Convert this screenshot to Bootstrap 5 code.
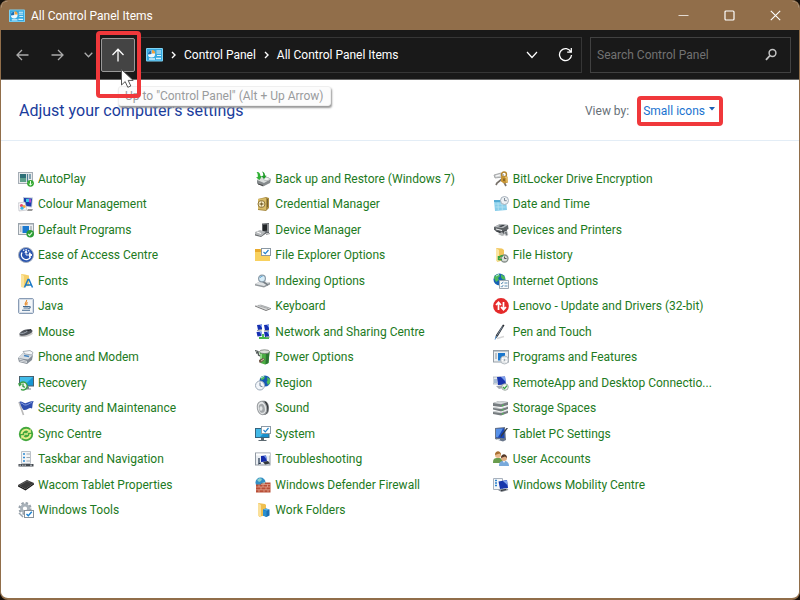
<!DOCTYPE html>
<html lang="en">
<head>
<meta charset="utf-8">
<meta name="viewport" content="width=device-width, initial-scale=1">
<title>All Control Panel Items</title>
<link href="https://cdn.jsdelivr.net/npm/bootstrap@5.3.0/dist/css/bootstrap.min.css" rel="stylesheet">
<style>
  body { background: #15100b; font-family: Roboto, "Open Sans", sans-serif; font-size: 12px; line-height: 16px; }
  .cp-window { background: #fff; border: 1px solid #916e4a; border-bottom-width: 2px; border-radius: 8px; overflow: hidden; }
  .title-bar { background: #916e4a; color: #fff; height: 29px; padding: 0 1px 0 8px; gap: 6px; }
  .caption-btn { width: 46px; height: 29px; color: #fff; }
  .tool-bar { background: #191919; border-bottom: 1px solid #666; height: 50px; padding: 0 8px 0 4px; color: #fff; }
  .nav-btn { width: 35px; height: 34px; color: #aaa; }
  .nav-btn.narrow { width: 26px; }
  .up-btn { width: 34px; height: 34px; background: #444; border: 1px solid #999; border-radius: 2px; color: #fff; }
  .address-bar { border: 1px solid #363636; height: 36px; margin-left: 5px; padding-left: 5px; }
  .address-bar a { color: #fff; }
  .search-box { border: 1px solid #414141; width: 201px; height: 36px; margin-left: 8px; padding: 0 12px 0 6px; }
  .search-box input { color: #ddd; font-size: 12px; outline: none; min-width: 0; }
  .search-box input::placeholder { color: #727272; opacity: 1; }
  .plain-btn { background: none; border: 0; padding: 0; font-size: 12px; line-height: 16px; }
  .page-head { height: 61px; padding: 2px 76px 0 18px; border-bottom: 1px solid #e3edf6; }
  .page-head h1 { font-size: 16px; line-height: 20px; color: #1a3c9c; }
  .view-label { color: #687078; }
  .view-btn { color: #1a73d0; border: 4px solid #f0383b; border-radius: 4px; height: 30px; padding: 0 4px 0 2px; }
  .item-area { padding: 25px 69px 75px 17px; }
  .item-grid { display: grid; grid-auto-rows: 25px 26px; }
  .item-grid a { color: #1d7a22; gap: 4px; }
  svg { flex: none; display: block; }
  .hint-box { position: absolute; left: 17px; top: 48px; z-index: 2; background: #fcfcfc; color: #999b9c; border: 1px solid #efefef; border-radius: 3px; box-shadow: 1px 2px 2px #999; padding: 1px 6px 1px 6px; white-space: nowrap; }
  .red-frame { position: absolute; left: -5px; top: -7px; width: 45px; height: 67px; border: 4px solid #f0383b; border-radius: 4px; z-index: 3; pointer-events: none; }
  .pointer { position: absolute; left: 19px; top: 30px; z-index: 4; }
</style>
<script src="https://cdn.jsdelivr.net/npm/bootstrap@5.3.0/dist/js/bootstrap.bundle.min.js"></script>
</head>
<body>
<svg width="0" height="0" class="position-absolute" aria-hidden="true">
  <symbol id="cp" viewBox="0 0 17 14">
    <rect width="17" height="13.5" rx="1" fill="#7fd4f5"/><rect x="1" y="1" width="15" height="11.5" fill="#35a8e0"/>
    <circle cx="5.5" cy="6" r="3.6" fill="#eaf7fd"/><path d="M5.5 6V2.4A3.6 3.6 0 0 0 2 6.5z" fill="#1b6fb5"/><path d="M6 5.500V2A3.6 3.6 0 0 1 9.2 5.500z" fill="#f3a13a"/>
    <path d="M10.5 3h4.500M10.500 5h4.500M11 7.500h4" stroke="#e4f6fd"/><path d="M3 11h6M10 10.500h5" stroke="#d9f2fc" stroke-width="1.300"/>
  </symbol>
</svg>
<div class="cp-window min-vh-100 d-flex flex-column">
  <header class="title-bar d-flex align-items-center">
    <svg width="16" height="14"><use href="#cp"/></svg>
    <span class="me-auto">All Control Panel Items</span>
    <div class="d-flex">
      <button class="caption-btn plain-btn d-flex align-items-center justify-content-center" aria-label="Minimise"><svg width="11" height="11"><path d="M.5 5.500h10" stroke="currentColor" opacity=".75"/></svg></button>
      <button class="caption-btn plain-btn d-flex align-items-center justify-content-center" aria-label="Maximise"><svg width="11" height="11"><rect x="1" y="1" width="9" height="9" rx="1" fill="none" stroke="currentColor" stroke-width="1.200"/></svg></button>
      <button class="caption-btn plain-btn d-flex align-items-center justify-content-center" aria-label="Close"><svg width="11" height="11"><path d="M.8.8l9.400 9.400M10.200.8L.8 10.200" stroke="currentColor" stroke-width="1.100"/></svg></button>
    </div>
  </header>

  <div class="tool-bar d-flex align-items-center">
    <button class="nav-btn plain-btn d-flex align-items-center justify-content-center" aria-label="Back"><svg width="13" height="12" fill="none" stroke="currentColor" stroke-width="1.300"><path d="M12.500 6H1M6 1L1 6l5 5"/></svg></button>
    <button class="nav-btn plain-btn d-flex align-items-center justify-content-center" aria-label="Forward"><svg width="13" height="12" fill="none" stroke="currentColor" stroke-width="1.300"><path d="M.5 6H12M7 1l5 5-5 5"/></svg></button>
    <button class="nav-btn narrow plain-btn d-flex align-items-center justify-content-center" aria-label="Recent locations"><svg width="9" height="6" fill="none" stroke="currentColor" stroke-width="1.300"><path d="M.7.8l3.800 4 3.800-4"/></svg></button>
    <div class="position-relative">
      <button class="up-btn p-0 d-flex align-items-center justify-content-center" aria-label="Up" aria-describedby="hint"><svg width="14" height="14" fill="none" stroke="currentColor" stroke-width="1.300"><path d="M7 13.500V1.500M1.500 7L7 1.300 12.500 7"/></svg></button>
      <div class="hint-box" id="hint" role="tooltip">Up to "Control Panel" (Alt + Up Arrow)</div>
      <div class="red-frame"></div>
      <svg class="pointer" width="15" height="21" viewBox="0 0 15 21"><path d="M1.500 1.500V17l3.700-3.400 2.600 5.700 3-1.300-2.600-5.600h5z" fill="#fff" stroke="#555" stroke-width="1"/></svg>
    </div>
    <div class="address-bar d-flex align-items-center flex-fill">
      <svg width="17" height="14"><use href="#cp"/></svg>
      <svg width="5" height="8" class="mx-2" fill="none" stroke="#fff" stroke-width="1.400"><path d="M1 1l3 3-3 3"/></svg>
      <a class="text-decoration-none" href="#">Control Panel</a>
      <svg width="5" height="8" class="mx-2" fill="none" stroke="#fff" stroke-width="1.400"><path d="M1 1l3 3-3 3"/></svg>
      <a class="text-decoration-none me-auto" href="#">All Control Panel Items</a>
      <button class="plain-btn text-white" aria-label="Previous locations"><svg width="12" height="8" fill="none" stroke="currentColor" stroke-width="1.200"><path d="M1 1l5 5.500L11 1"/></svg></button>
      <button class="plain-btn text-white ms-3 ps-1 me-2" aria-label="Refresh"><svg width="15" height="15" fill="none" stroke="currentColor" stroke-width="1.300"><path d="M12.900 5A6 6 0 1 0 13.500 8M13.300 1v4.200H9.200"/></svg></button>
    </div>
    <form class="search-box d-flex align-items-center" role="search">
      <input class="bg-transparent border-0 p-0 flex-fill" type="text" placeholder="Search Control Panel" aria-label="Search Control Panel">
      <button class="plain-btn" type="button" aria-label="Search"><svg width="14" height="14" fill="none" stroke="#c4c4c4"><circle cx="8.500" cy="5" r="3.400" stroke-width="1.500"/><path d="M6 7.500L2 11.800" stroke-width="1.800"/></svg></button>
    </form>
  </div>

  <div class="page-head d-flex align-items-center">
    <h1 class="m-0 me-auto fw-normal">Adjust your computer's settings</h1>
    <span class="view-label me-2" id="view-by">View by:</span>
    <button class="plain-btn view-btn d-flex align-items-center gap-1" aria-labelledby="view-by view-value"><span id="view-value">Small icons</span><svg width="6" height="4" class="mb-1"><path d="M0 0h6L3 3.500z" fill="#1a5fb4"/></svg></button>
  </div>

  <main class="item-area">
    <div class="row g-0">
      <div class="col-4"><ul class="item-grid list-unstyled m-0">
        <li class="d-flex align-items-center"><a class="d-flex align-items-center text-decoration-none text-nowrap" href="#"><svg width="16" height="16"><rect x=".5" y="1.500" width="14" height="11" fill="#e8eaec" stroke="#a5adb5"/><path d="M2 3h6v8H2z" fill="#2c6f77"/><path d="M2 7h6v4H2z" fill="#5da08b"/><path d="M9.500 3v8M12 3v5" stroke="#4d7e94" stroke-width="1.300"/><circle cx="12.500" cy="12.300" r="3.400" fill="#35a832"/><path d="M12.500 10v4M10.800 12.500l1.700 1.700 1.700-1.700" stroke="#eaffea" fill="none"/></svg>AutoPlay</a></li>
        <li class="d-flex align-items-center"><a class="d-flex align-items-center text-decoration-none text-nowrap" href="#"><svg width="16" height="16"><path d="M5 1l10 .5-1 10-9-1z" fill="#bcc8d9"/><path d="M6 2l8 .5-.8 8L6 9.500z" fill="#1c3cac"/><path d="M8 3h3v3H8z" fill="#3ccbe8"/><path d="M11 3l2 .2v3.300h-2z" fill="#b44dca"/><path d="M10 13h5l-1 2H9z" fill="#999"/><path d="M0 7l7-1 2 8-8 1z" fill="#f5f5f7" stroke="#b7b9bf" stroke-width=".6"/><circle cx="3.500" cy="9.500" r="1.600" fill="#e8456c"/><circle cx="6" cy="10.500" r="1.600" fill="#f7a93a"/><circle cx="4" cy="12.200" r="1.600" fill="#38b5e6"/></svg>Colour Management</a></li>
        <li class="d-flex align-items-center"><a class="d-flex align-items-center text-decoration-none text-nowrap" href="#"><svg width="16" height="16"><rect x=".5" y="1.500" width="15" height="11" fill="#eceef0" stroke="#9aa3ab"/><path d="M1 2.500h14" stroke="#c3c9cf"/><path d="M4.500 4H11v7H4.500z" fill="#1b78cf"/><path d="M2 5h1.500M2 7h1.500M2 9h1.500M12 5h2M12 7h2" stroke="#8a939b"/><circle cx="12.200" cy="11.800" r="3.800" fill="#2b9d35"/><path d="M10.200 12l1.400 1.400 2.600-3" fill="none" stroke="#d9f5d5" stroke-width="1.200"/></svg>Default Programs</a></li>
        <li class="d-flex align-items-center"><a class="d-flex align-items-center text-decoration-none text-nowrap" href="#"><svg width="16" height="16"><circle cx="8" cy="8" r="7.500" fill="#2954ae" stroke="#a9b2bf"/><path d="M4 5.500A4.800 4.800 0 0 0 12.500 10" fill="none" stroke="#fff" stroke-width="1.400"/><path d="M5 3.500a5 5 0 0 1 7 2" fill="none" stroke="#dbe6fa" stroke-width="1.400" stroke-dasharray="1.500 1"/><path d="M8 8h5.500M11.500 6l2.500 2-2.500 2zM8 8V4.500M6.800 5.800L8 4l1.200 1.800" stroke="#fff" fill="#fff" stroke-width=".9"/></svg>Ease of Access Centre</a></li>
        <li class="d-flex align-items-center"><a class="d-flex align-items-center text-decoration-none text-nowrap" href="#"><svg width="16" height="16"><path d="M3 1l4 .5 4 1V13l-8 1z" fill="#f5cf69"/><path d="M3 1l3 2v12l-3-1z" fill="#fbe39b"/><path d="M6.500 14.500L10 6.500h1l3.500 8M8 12h5" fill="none" stroke="#1c7ac8" stroke-width="1.500"/></svg>Fonts</a></li>
        <li class="d-flex align-items-center"><a class="d-flex align-items-center text-decoration-none text-nowrap" href="#"><svg width="16" height="16"><rect x=".5" y=".5" width="15" height="15" rx="1.500" fill="#f4f6f9" stroke="#899cb5"/><rect x="1.500" y="1.500" width="13" height="13" fill="none" stroke="#d3dce7"/><path d="M8.500 2c1 2-3 2.800-.8 5.500M9.700 4.500c-1.500.8-1.200 1.500-.5 2.700" fill="none" stroke="#e88a28" stroke-width="1.100"/><path d="M5 8.500h6M5.500 10h5M11 8.500c2 0 1.500 1.800-.5 2M4 12.300h8" fill="none" stroke="#42688e" stroke-width="1.100"/></svg>Java</a></li>
        <li class="d-flex align-items-center"><a class="d-flex align-items-center text-decoration-none text-nowrap" href="#"><svg width="16" height="16"><ellipse cx="8" cy="10.500" rx="7" ry="2.200" transform="rotate(-12 8 10.500)" fill="#c9c9c9"/><path d="M1.500 9.500C3 6.500 8 5 12 5.200c3 .3 3.300 2.400 1 3.800-2.700 1.700-6.500 3-9.500 2.700-1.500-.2-2.500-1-2-2.200z" fill="#50545b"/><path d="M2 9c2 1 5 0 7-1.500l3-2.200" stroke="#a5adb8" fill="none"/><path d="M9 7l4-1.500" stroke="#24272c" stroke-width="1.300"/></svg>Mouse</a></li>
        <li class="d-flex align-items-center"><a class="d-flex align-items-center text-decoration-none text-nowrap" href="#"><svg width="16" height="16"><path d="M0 9l5-5 10 2-1 5-5 4-8-2z" fill="#858d96"/><path d="M0 9l5-5 10 2-5 4.500z" fill="#d8dde2"/><path d="M5 2.500l7-1 3 2-1 2.500-7-1z" fill="#f3f5f7" stroke="#89929c" stroke-width=".7"/><path d="M6 6.500l5 1" stroke="#4484c0" stroke-width="1.500"/><path d="M1 10l8 2.500M1.500 12l7.500 1.500" stroke="#edf0f3" stroke-width=".8"/></svg>Phone and Modem</a></li>
        <li class="d-flex align-items-center"><a class="d-flex align-items-center text-decoration-none text-nowrap" href="#"><svg width="16" height="16"><rect x="1.500" y="1.500" width="14" height="9.500" fill="#1796d3" stroke="#48606e"/><path d="M2 2h13L6 10.500H2z" fill="#42bce9"/><path d="M8 11.500h3v2h2v1H7z" fill="#7d8790"/><circle cx="5" cy="11" r="4" fill="#f1f4ef"/><path d="M1.500 9.500A4 4 0 1 1 3 14.300M5 8.500v2.800l1.800 1" fill="none" stroke="#3a9e43" stroke-width="1.400"/><path d="M0 8l1.200 3.500L4 9.500z" fill="#3a9e43"/></svg>Recovery</a></li>
        <li class="d-flex align-items-center"><a class="d-flex align-items-center text-decoration-none text-nowrap" href="#"><svg width="16" height="16"><path d="M1 2l4.500 13" stroke="#b9b9b9" stroke-width="1.600"/><path d="M1.500 2C4 .5 5.500 4 8 3c3-1 4-2.500 8-1.500-2 1.500-1 4-2 7-3-2-4 2-8.500 1.500C3.500 8 3 5 1.500 2z" fill="#304fae"/><path d="M2.500 3C5 2.500 5 5.500 8 5c3-.5 3-2 6-2.500" fill="none" stroke="#839be0"/></svg>Security and Maintenance</a></li>
        <li class="d-flex align-items-center"><a class="d-flex align-items-center text-decoration-none text-nowrap" href="#"><svg width="16" height="16"><circle cx="8" cy="8" r="7.200" fill="#43a83d"/><path d="M3.500 8A4.500 4.500 0 0 1 11 4.800M12.500 8A4.500 4.500 0 0 1 5 11.200" fill="none" stroke="#e7ed8c" stroke-width="1.900"/><path d="M9 6.800l4-.1-.5-4zM7 9.200l-4 .1.500 4z" fill="#e7ed8c"/><path d="M6 8h4" stroke="#e7ed8c" stroke-width="1.500"/></svg>Sync Centre</a></li>
        <li class="d-flex align-items-center"><a class="d-flex align-items-center text-decoration-none text-nowrap" href="#"><svg width="16" height="16"><path d="M3.500.5h9v12h-9z" fill="#f3f5f7" stroke="#bcc2c8"/><path d="M5 3h2M5 6.500h2M5 10h2" stroke="#2d8bd4" stroke-width="1.500"/><path d="M8.500 3H12M8.500 6.500H12M8.500 10H12" stroke="#a0a8af"/><path d="M.5 13h15v2.500H.5z" fill="#454a50"/><path d="M1.500 14.200h1.500m1 0h1.500m1 0H8m4 0h2" stroke="#c8cdd2"/></svg>Taskbar and Navigation</a></li>
        <li class="d-flex align-items-center"><a class="d-flex align-items-center text-decoration-none text-nowrap" href="#"><svg width="16" height="16"><path d="M0 8L9 3l7 3-8.500 6z" fill="#393939"/><path d="M0 8l7.500 4L16 6v1.500L7.500 13.500 0 9.500z" fill="#191919"/><path d="M2 8l7-4 3 1.300" stroke="#666" fill="none" stroke-width=".8"/></svg>Wacom Tablet Properties</a></li>
        <li class="d-flex align-items-center"><a class="d-flex align-items-center text-decoration-none text-nowrap" href="#"><svg width="16" height="16"><circle cx="7" cy="6.500" r="5.300" fill="none" stroke="#98a2ab" stroke-width="2.500" stroke-dasharray="2.300 1.860"/><circle cx="7" cy="6.500" r="3.500" fill="none" stroke="#a9b2ba" stroke-width="2.800"/><path d="M1 11l4 4" stroke="#98a2ab" stroke-width="1.500"/><rect x="6.500" y="8.500" width="9" height="7" fill="#fff" stroke="#87919a"/><path d="M8.500 12l1.800 1.800 3.500-4" fill="none" stroke="#1b82d2" stroke-width="1.400"/></svg>Windows Tools</a></li>
      </ul></div>

      <div class="col-4"><ul class="item-grid list-unstyled m-0">
        <li class="d-flex align-items-center"><a class="d-flex align-items-center text-decoration-none text-nowrap" href="#"><svg width="16" height="16"><path d="M2 9l8-4 6 3-1 4-7 3.500-6-3z" fill="#858a8c"/><path d="M2 9l8-4 6 3-7 4z" fill="#d9dddc"/><ellipse cx="11.500" cy="8" rx="3" ry="1.600" fill="#f3f4f4" stroke="#9da3a3" stroke-width=".6"/><path d="M3 13l5 1.500" stroke="#444"/><path d="M1.500 1C4 .5 5 2 5.500 5H7l-2.500 4L1 6.500l1.800-.5C3 3.500 2.500 2 1.500 1z" fill="#30b035"/><path d="M7 .5c2 .5 3 2 3 4l1.500.2L9 8 6.500 5l1.700-.2C8.500 3 8 2 7 .5z" fill="#209c2b"/></svg>Back up and Restore (Windows 7)</a></li>
        <li class="d-flex align-items-center"><a class="d-flex align-items-center text-decoration-none text-nowrap" href="#"><svg width="16" height="16"><path d="M3 3l8-2 3 1v10l-3 3-8-1z" fill="#a88b40"/><path d="M3 3l8-1v12l-8-1z" fill="#d8bc68"/><circle cx="6.500" cy="8" r="3.500" fill="#f2e7c1" stroke="#917735"/><circle cx="6.500" cy="8" r="1.200" fill="#706038"/><path d="M6.500 5v6M3.500 8h6" stroke="#846b2f" stroke-width=".5"/><path d="M12.500 3v8" stroke="#77612d"/></svg>Credential Manager</a></li>
        <li class="d-flex align-items-center"><a class="d-flex align-items-center text-decoration-none text-nowrap" href="#"><svg width="16" height="16"><path d="M7 1.500L14 1v10l-7 1z" fill="#606468"/><path d="M8 3l4-.5v6L8 9z" fill="#222629"/><path d="M13 2v8" stroke="#b8bbbd"/><path d="M0 10l5-2 6 2-5 4-6-2z" fill="#b5b8ba"/><path d="M0 12l6 2 5-4v1.500L6 15l-6-1.500z" fill="#696d70"/><path d="M2 10l4 1.500" stroke="#fff"/><path d="M11 12l4-1v1l-4 1z" fill="#999"/></svg>Device Manager</a></li>
        <li class="d-flex align-items-center"><a class="d-flex align-items-center text-decoration-none text-nowrap" href="#"><svg width="16" height="16"><path d="M0 2h5.500l1.500 2h8v10H0z" fill="#e9aa2c"/><path d="M0 5h15v9H0z" fill="#f8d15f"/><rect x="6.500" y="1.500" width="9" height="7" fill="#fff" stroke="#8b98a3"/><path d="M8.500 5l1.800 1.700L13.500 3" fill="none" stroke="#2282cb" stroke-width="1.200"/></svg>File Explorer Options</a></li>
        <li class="d-flex align-items-center"><a class="d-flex align-items-center text-decoration-none text-nowrap" href="#"><svg width="16" height="16"><path d="M0 11l6-3 9 1.500v2L9 14.500l-9-2z" fill="#94999d"/><path d="M0 11l6-3 9 1.500L9 13z" fill="#dfe2e4"/><path d="M7 8l6 4" stroke="#777f85" stroke-width="1.600"/><circle cx="7" cy="5.500" r="3.400" fill="#d8edf8" stroke="#8a9ba8" stroke-width="1.200"/><path d="M5 5a2 2 0 0 1 2.500-1.500" fill="none" stroke="#62a7d3"/></svg>Indexing Options</a></li>
        <li class="d-flex align-items-center"><a class="d-flex align-items-center text-decoration-none text-nowrap" href="#"><svg width="16" height="16"><path d="M0 7.500l5-1 11 3.500-5 2z" fill="#d7d8d9"/><path d="M0 7.500L11 12l5-2v1l-5 2L0 8.500z" fill="#777"/><path d="M3 7.500l10 3M5.500 7l9 3" stroke="#929698" stroke-width=".7"/></svg>Keyboard</a></li>
        <li class="d-flex align-items-center"><a class="d-flex align-items-center text-decoration-none text-nowrap" href="#"><svg width="16" height="16"><path d="M2 1l5-.5v5L3 6zM9 1l5-.5V6L10 6.500zM1.500 8l5-.5v4.500l-4 .5zM9 8l5-.5v5l-4 .5z" fill="#162fb1"/><path d="M5 1l2 3V.8zM12 1l2 3V.8zM4.500 8l2 3V7.500zM12 8l2 3V7.500z" fill="#7da5f0"/><path d="M2 6.500l5-.7M9 7l5-.7" stroke="#8d9299"/><path d="M4 14h10M8 10v4" stroke="#43b449" stroke-width="1.800"/><path d="M11 13h4" stroke="#9ba2a8"/></svg>Network and Sharing Centre</a></li>
        <li class="d-flex align-items-center"><a class="d-flex align-items-center text-decoration-none text-nowrap" href="#"><svg width="16" height="16"><path d="M4.500 2.500h10l-1 11.500-3.500 1.500-4.500-1.500z" fill="#4bae43"/><path d="M11 3h3.500l-1 11-3 1.500z" fill="#2c7731"/><ellipse cx="9.500" cy="2.700" rx="5" ry="1.900" fill="#dde1db" stroke="#666f66" stroke-width=".7"/><path d="M6 5v7" stroke="#b3eaa8" stroke-width="1.400"/><path d="M0 1.500l3 1 .5 3.500L5 7M1 4l2.500-.5" fill="none" stroke="#4e5654" stroke-width="1.300"/><path d="M4 11l4-2 2 1-3 3c-2 1.500-3 1-3-2z" fill="#715647"/><path d="M6 12l3-2" stroke="#d4c6af"/></svg>Power Options</a></li>
        <li class="d-flex align-items-center"><a class="d-flex align-items-center text-decoration-none text-nowrap" href="#"><svg width="16" height="16"><circle cx="10" cy="6" r="5.500" fill="#1859b4"/><path d="M6 2c2-1.500 3-1 4-.5L9 4 7 5 5.500 4zM12 2l3 2v4l-2 2-1.500-3 1-1.500z" fill="#4dbd59"/><path d="M6 3l3-2" stroke="#b5def5"/><circle cx="5" cy="10.500" r="4.500" fill="#f3f6fa" stroke="#9ca9b8"/><path d="M5 7.500v3.300l2.500 1" fill="none" stroke="#5d7187" stroke-width=".9"/></svg>Region</a></li>
        <li class="d-flex align-items-center"><a class="d-flex align-items-center text-decoration-none text-nowrap" href="#"><svg width="16" height="16"><path d="M7 1c4-.8 7 2 7 7s-2 7-6 7z" fill="#777b7e"/><path d="M10 2c3 2 3.500 9 0 12" fill="none" stroke="#35383a" stroke-width="1.400"/><ellipse cx="7" cy="8" rx="4.700" ry="6.700" transform="rotate(-12 7 8)" fill="#e3e5e6" stroke="#989c9f"/><ellipse cx="6.800" cy="8.300" rx="2.900" ry="4.500" transform="rotate(-12 7 8)" fill="#a2a6a9"/><ellipse cx="6" cy="8.500" rx="1.500" ry="2.300" fill="#e2e4e5"/></svg>Sound</a></li>
        <li class="d-flex align-items-center"><a class="d-flex align-items-center text-decoration-none text-nowrap" href="#"><svg width="16" height="16"><rect x=".5" y="2.500" width="13.500" height="9" fill="#178fcd" stroke="#35637e"/><path d="M1 3h12l-8 8H1z" fill="#43b9e7"/><path d="M6 12h3v2h2.500v1h-8v-1H6z" fill="#5d6971"/><rect x="6.500" y=".5" width="9" height="7" fill="#fff" stroke="#8c9aa6"/><path d="M8.500 4l1.800 1.800L13.500 2" fill="none" stroke="#2384cd" stroke-width="1.200"/></svg>System</a></li>
        <li class="d-flex align-items-center"><a class="d-flex align-items-center text-decoration-none text-nowrap" href="#"><svg width="16" height="16"><rect x=".5" y="2" width="14.500" height="12" fill="#e9edf2" stroke="#9098a2"/><path d="M1 3.500h14" stroke="#fff" stroke-width="2"/><path d="M6 5l5-.5 1 6-6 .5z" fill="#152caa"/><path d="M9 5l2-.5.5 4z" fill="#7396e8"/><path d="M8 11l5-1 2 2.500-5 1z" fill="#33383e"/><path d="M3 7h2v5H3z" fill="#6d7b8d"/><path d="M3 13l3-1" stroke="#273343"/></svg>Troubleshooting</a></li>
        <li class="d-flex align-items-center"><a class="d-flex align-items-center text-decoration-none text-nowrap" href="#"><svg width="16" height="16"><circle cx="5.500" cy="5.500" r="5" fill="#338fc5"/><path d="M2 3c2-2 3-2 5-1L6 4 4 5zM7 6l3-1v3L7 9z" fill="#8bd0ce"/><path d="M1 7.500h5v-1h4v-1h5.500V15.500H1z" fill="#b84e37"/><path d="M1 10h14.500M1 12.800h14.500M6 7.500h9.500M4 7.500V10M9 5.500v2M12.500 7.500V10M8 7.500V10M6 10v2.800M11 10v2.800M4 12.800v2.700M9 12.800v2.700M13 12.800v2.700" stroke="#edb9a5" stroke-width=".6"/></svg>Windows Defender Firewall</a></li>
        <li class="d-flex align-items-center"><a class="d-flex align-items-center text-decoration-none text-nowrap" href="#"><svg width="16" height="16"><path d="M3 1l7 1 1 1v10l-7 2z" fill="#efbf4f"/><path d="M3 1l3 2v12.500l-3-1.700z" fill="#fae09a"/><path d="M8 7.500l3-1 3.500 1v6L11.500 15 8 13.500z" fill="#196eb4"/><path d="M8 7.500l3-1 3.500 1-3 1.200z" fill="#58b3e7"/><path d="M8 8l3.500 1v6L8 13.500z" fill="#298fd0"/></svg>Work Folders</a></li>
      </ul></div>

      <div class="col-4"><ul class="item-grid list-unstyled m-0">
        <li class="d-flex align-items-center"><a class="d-flex align-items-center text-decoration-none text-nowrap" href="#"><svg width="16" height="16"><path d="M1 4l7-2 3 2-1 2-8 1z" fill="#d2d4d5" stroke="#8c8f90" stroke-width=".7"/><path d="M9 8L4 12l-1 2M10 9l3 6" stroke="#77716a" stroke-width="1.700" fill="none"/><circle cx="11" cy="3.500" r="2.500" fill="none" stroke="#b5852c" stroke-width="1.400"/><path d="M8 5.500h6.500l.5 6-4 1-3-2z" fill="#c69536"/><path d="M12 6l2 1v4" stroke="#f0d084" fill="none"/><path d="M11 7.500v2.500" stroke="#583f13"/><path d="M3 5l4-1" stroke="#fff"/></svg>BitLocker Drive Encryption</a></li>
        <li class="d-flex align-items-center"><a class="d-flex align-items-center text-decoration-none text-nowrap" href="#"><svg width="16" height="16"><path d="M1 4h12l1 10-12 1z" fill="#86cdea"/><path d="M1 4h12v2H1z" fill="#55acd4"/><path d="M2 8h10M2.500 11h10M5 6.500l.3 7.500M9 6.500l.3 7.500" stroke="#b6e3f3" stroke-width=".8"/><circle cx="11.500" cy="4.500" r="4" fill="#eef1f4" stroke="#a6b0ba"/><path d="M11.500 2v2.700h2.200" fill="none" stroke="#6e7d8b" stroke-width=".9"/></svg>Date and Time</a></li>
        <li class="d-flex align-items-center"><a class="d-flex align-items-center text-decoration-none text-nowrap" href="#"><svg width="16" height="16"><path d="M1 5l6-3 8 1 .5 4-6 3L1 8z" fill="#5d6265"/><path d="M1 5l6-3 8 1-5 3z" fill="#b9bdc0"/><path d="M5 4l5-1 2 .5-4 1.500z" fill="#30363b"/><path d="M2 8l7 1.500 5-2v3l-4 2-7-3z" fill="#3d4246"/><path d="M3 7l6 1.500" stroke="#f1f3f4"/><path d="M5 12l4-2 3 3-3 1z" fill="#b3b6b8"/><path d="M11 10l3-1 1 4-2 1z" fill="#72777b" stroke="#d3d6d8" stroke-width=".7"/></svg>Devices and Printers</a></li>
        <li class="d-flex align-items-center"><a class="d-flex align-items-center text-decoration-none text-nowrap" href="#"><svg width="16" height="16"><path d="M3 1l6 .5L11 3v10l-7 2z" fill="#f1c55a"/><path d="M3 1l3 2v12l-3-1z" fill="#fbe5a3"/><circle cx="11.500" cy="11.500" r="3.500" fill="#d8ddd9" stroke="#858e89" stroke-width="1.300"/><path d="M11.500 9.500v2h2" fill="none" stroke="#555"/><path d="M6 11c1-2.500 2.500-2.500 4-2M5.500 9v3.500H9" fill="none" stroke="#35a23e" stroke-width="1.500"/></svg>File History</a></li>
        <li class="d-flex align-items-center"><a class="d-flex align-items-center text-decoration-none text-nowrap" href="#"><svg width="16" height="16"><circle cx="6.500" cy="6.500" r="6" fill="#1762b5"/><path d="M1 5c0-2 3-4 5-4L7 3 5 5l1 2-3 2zM8 1l4 3v3L9 6 8 4z" fill="#4cb95a"/><path d="M3 3l3-1.500" stroke="#bde9ef"/><path d="M6.500 7.500h9v8h-9z" fill="#f8f9fa" stroke="#9ba7b2"/><path d="M8 10l.8.800 1.400-2M8 13.300l.8.800 1.400-2M11.500 10h3M11.500 13h3" fill="none" stroke="#4781ab" stroke-width=".9"/></svg>Internet Options</a></li>
        <li class="d-flex align-items-center"><a class="d-flex align-items-center text-decoration-none text-nowrap" href="#"><svg width="16" height="16"><circle cx="8" cy="8" r="7.900" fill="#e42a2a"/><path d="M5.500 12V4.500M3 7l2.500-2.700L8 7M10.500 4v7.500M8 9l2.500 2.700L13 9" fill="none" stroke="#fff" stroke-width="1.700"/></svg>Lenovo - Update and Drivers (32-bit)</a></li>
        <li class="d-flex align-items-center"><a class="d-flex align-items-center text-decoration-none text-nowrap" href="#"><svg width="16" height="16"><path d="M4 14.500l7-2" stroke="#d7d7d7" stroke-width="1.500"/><path d="M10 .5l1.500.7L5 12l-3 3.500L3 11z" fill="#262b31"/><path d="M9.500 2.500L4 11.500" stroke="#8999ab" stroke-width=".9"/><path d="M3.500 12L2 15.500" stroke="#5b9bd8"/></svg>Pen and Touch</a></li>
        <li class="d-flex align-items-center"><a class="d-flex align-items-center text-decoration-none text-nowrap" href="#"><svg width="16" height="16"><rect x=".5" y="1.500" width="15" height="11.500" fill="#eceff1" stroke="#969fa7"/><path d="M1 2.500h14" stroke="#bec6cc"/><path d="M5 4h7v7.500H5z" fill="#1977ce"/><path d="M2 5h2M2 7h2M2 9h2" stroke="#8c969e"/><circle cx="11.500" cy="11" r="4" fill="#e4e7e9" stroke="#a8b0b6" stroke-width=".8"/><path d="M9 12l5-3M9 9l5 4" stroke="#fff" stroke-width="1.100"/><circle cx="11.500" cy="11" r="1" fill="#9ba5ad"/></svg>Programs and Features</a></li>
        <li class="d-flex align-items-center"><a class="d-flex align-items-center text-decoration-none text-nowrap" href="#"><svg width="16" height="16"><path d="M0 2h8v7H0z" fill="#e5e9ee" stroke="#9fa9b6" stroke-width=".7"/><path d="M1 5h3M1 7h3" stroke="#6d91b9"/><path d="M4 2l8-.5 1 8-8 .5z" fill="#1a36ae"/><path d="M8 2l4-.3.700 5z" fill="#7ca0ed"/><path d="M3 11l9-1 2 2-8 2z" fill="#a3a8ae"/><circle cx="12" cy="12" r="3.300" fill="#f0f3f0" stroke="#8d9991" stroke-width=".8"/><path d="M10 12l1.500 1.600 2.500-3" fill="none" stroke="#36a340" stroke-width="1.300"/></svg>RemoteApp and Desktop Connectio...</a></li>
        <li class="d-flex align-items-center"><a class="d-flex align-items-center text-decoration-none text-nowrap" href="#"><svg width="16" height="16"><path d="M0 3l6-2 9 1v3L8 7 0 6zM0 7l8 1.500 7-2V9l-7 2.500-8-2zM0 11l8 1.500 7-2V13l-7 2.500-8-1.500z" fill="#777d80"/><path d="M0 3l6-2 9 1-7 2.200zM0 7l8 1 7-2v.8L8 9 0 8zM0 11l8 1 7-2v.8L8 13l-8-1z" fill="#d4d8d9"/><path d="M9 5.700l1.500-.4M9 10l1.500-.4M9 14l1.500-.4" stroke="#4cbc52" stroke-width="1.400"/></svg>Storage Spaces</a></li>
        <li class="d-flex align-items-center"><a class="d-flex align-items-center text-decoration-none text-nowrap" href="#"><svg width="16" height="16"><path d="M2 2l10-1 1 13-3 1.500L2 13z" fill="#69768a"/><path d="M3 3l8-.8.5 10L3 11.500z" fill="#1846b6"/><path d="M3 3l7-.6-5 8.800-2-.1z" fill="#5791e8"/><path d="M15 2l-6 8-1.500 2 .5-3L13.500 2z" fill="#343940"/><path d="M4 13.500h3" stroke="#ced5df"/></svg>Tablet PC Settings</a></li>
        <li class="d-flex align-items-center"><a class="d-flex align-items-center text-decoration-none text-nowrap" href="#"><svg width="16" height="16"><path d="M0 12c0-4 1-5 5-5s5 2 5 5z" fill="#699d4e"/><circle cx="5" cy="4" r="3" fill="#e8b98c"/><path d="M2 4c0-5 6-5 6 0L6.500 2.500z" fill="#a86f31"/><path d="M6 15c0-4 1.500-5 5-5s5 2 5 5z" fill="#78a9db"/><circle cx="11" cy="7" r="3" fill="#dfac83"/><path d="M8 7c0-5 6-5 6 0l-2-1.500z" fill="#523829"/><path d="M10 10l1 2 1-2" fill="#fff"/></svg>User Accounts</a></li>
        <li class="d-flex align-items-center"><a class="d-flex align-items-center text-decoration-none text-nowrap" href="#"><svg width="16" height="16"><path d="M.5 1.500h9v11h-9z" fill="#f5f7f9" stroke="#a8b1bd"/><path d="M2 3.500h2M2 6h2M2 8.500h2" stroke="#2c83ce" stroke-width="1.400"/><path d="M5.500 4.500L14 3l1 8-8 1z" fill="#1736ac"/><path d="M10 4l4-.7.600 5z" fill="#80a4ee"/><path d="M5 13l9-1.500 1.500 1.500-7 2z" fill="#858a91"/><path d="M8 13.500l5-1" stroke="#2d3238"/></svg>Windows Mobility Centre</a></li>
      </ul></div>
    </div>
  </main>
</div>
</body>
</html>
